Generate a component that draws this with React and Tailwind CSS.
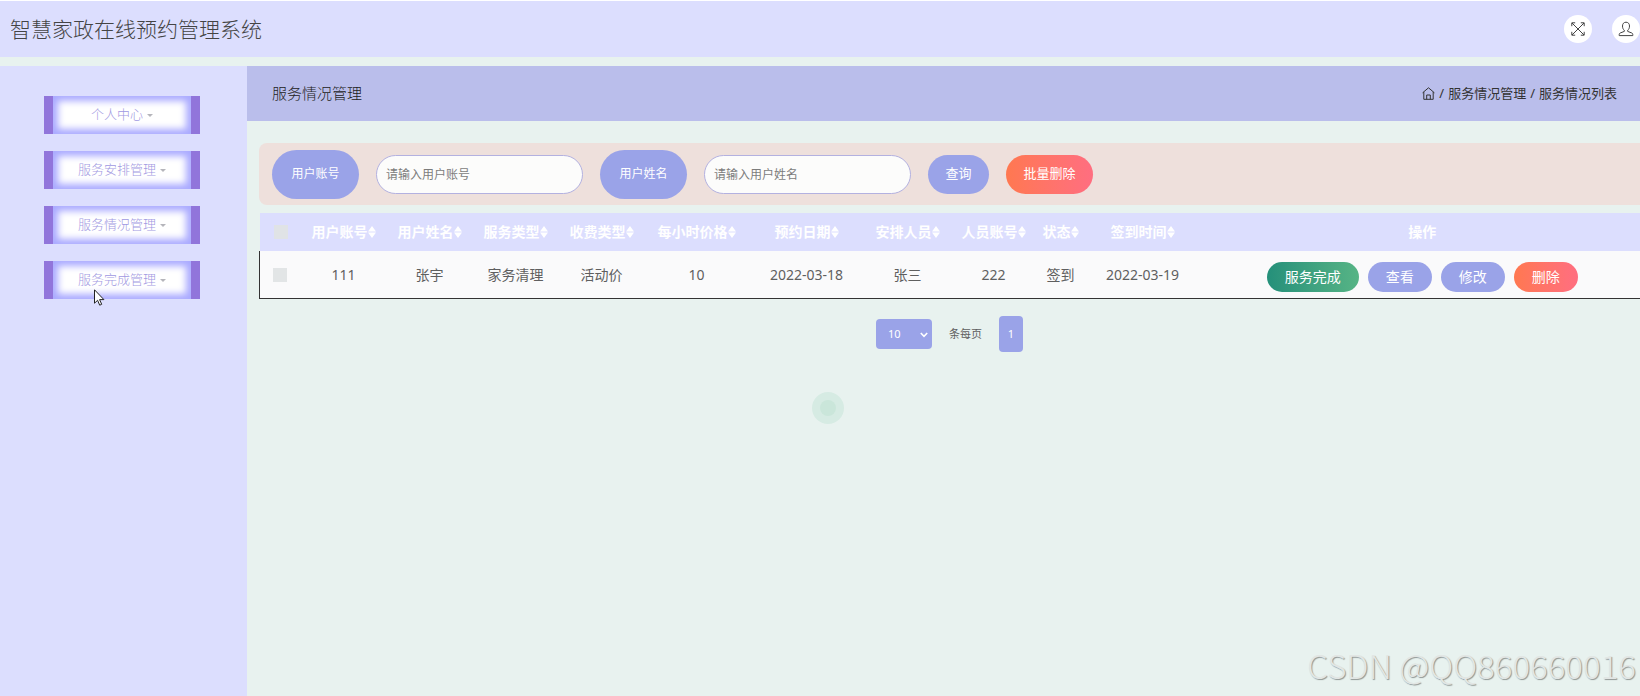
import { useState } from "react";

const menus = ["个人中心", "服务安排管理", "服务情况管理", "服务完成管理"];

const columns = [
  { key: "account",   label: "用户账号",   width: "w-[86px]" },
  { key: "name",      label: "用户姓名",   width: "w-[86px]" },
  { key: "type",      label: "服务类型",   width: "w-[86px]" },
  { key: "fee",       label: "收费类型",   width: "w-[86px]" },
  { key: "price",     label: "每小时价格", width: "w-[104px]" },
  { key: "date",      label: "预约日期",   width: "w-[116px]" },
  { key: "staff",     label: "安排人员",   width: "w-[86px]" },
  { key: "staffNo",   label: "人员账号",   width: "w-[86px]" },
  { key: "status",    label: "状态",       width: "w-[48px]" },
  { key: "checkedAt", label: "签到时间",   width: "w-[116px]" },
];

const rows = [
  {
    account: "111", name: "张宇", type: "家务清理", fee: "活动价", price: "10",
    date: "2022-03-18", staff: "张三", staffNo: "222", status: "签到", checkedAt: "2022-03-19",
  },
];

function FullscreenIcon() {
  return (
    <svg className="h-4 w-4" viewBox="0 0 16 16" fill="none" stroke="currentColor" strokeWidth="1">
      <path d="M2 2l12 12M14 2L2 14M1.8 5.2V1.8h3.4M10.8 1.8h3.4v3.4M14.2 10.8v3.4h-3.4M5.2 14.2H1.8v-3.4" />
    </svg>
  );
}

function UserIcon() {
  return (
    <svg className="h-4 w-4" viewBox="0 0 16 16" fill="none" stroke="currentColor" strokeWidth="1">
      <path d="M6.3 9.2C5 8.3 4.5 6.8 4.5 5c0-2.3 1.4-3.8 3.5-3.8s3.500 1.500 3.500 3.800c0 1.800-.5 3.300-1.800 4.200v1.200l4.100 1.600c.7.300 1 .8 1 1.600v1H1.200v-1c0-.8.3-1.300 1-1.600l4.100-1.600z" />
    </svg>
  );
}

function HomeIcon() {
  return (
    <svg className="h-[13px] w-[13px]" viewBox="0 0 13 13" fill="none" stroke="currentColor" strokeWidth="1">
      <path d="M.6 5.800L6.500.8l5.900 5M1.800 5v7.300h9.400V5M4.700 12.300V8h3.600v4.300" />
    </svg>
  );
}

function SortIcon() {
  return (
    <svg className="h-3 w-2 shrink-0" viewBox="0 0 8 12" fill="currentColor">
      <path d="M4 0l4 5.400H0zM4 12L0 6.600h8z" />
    </svg>
  );
}

function Checkbox({ label, tone }) {
  return (
    <input type="checkbox" aria-label={label}
      className={`block h-[14px] w-[14px] appearance-none ${tone}`} />
  );
}

function SearchField({ id, label, placeholder }) {
  return (
    <>
      <label htmlFor={id}
        className="flex h-[49px] w-[87px] shrink-0 items-center justify-center rounded-full bg-[#9aa3e8] text-xs text-white">
        {label}
      </label>
      <input id={id} type="text" placeholder={placeholder}
        className="h-[39px] w-[207px] rounded-full border border-[#b3b1e0] bg-[#fcfcfb] px-[9px] text-xs
                   text-gray-700 outline-none placeholder:text-[#7c7c7c]" />
    </>
  );
}

function ActionButton({ children, tone }) {
  return (
    <button type="button" className={`h-[30px] rounded-full px-[18px] text-sm text-white ${tone}`}>
      {children}
    </button>
  );
}

function Sidebar() {
  return (
    <aside className="w-[247px] shrink-0 bg-[#dcdefe] pt-[30px] pr-[47px] pl-11">
      <nav className="flex flex-col gap-[17px]">
        {menus.map((item) => (
          <button key={item} type="button"
            className="flex h-[38px] items-center justify-center gap-1 border-x-[9px] border-[#9175db] bg-white
                       text-[13px] font-light text-[#9f99e2] shadow-[inset_0_0_7px_5px_#aaaaff]">
            {item}
            <span className="border-x-[3px] border-t-[3px] border-x-transparent border-t-[#b5b5bb]" />
          </button>
        ))}
      </nav>
    </aside>
  );
}

function DataTable() {
  return (
    <table className="mt-2 w-full table-fixed border-collapse text-center text-sm">
      <thead>
        <tr className="h-[38px] bg-[#dcdefe] text-white">
          <th className="w-[41px] pl-[14px]"><Checkbox label="全选" tone="bg-[#e0e3e6]" /></th>
          {columns.map((col) => (
            <th key={col.key} className={`whitespace-nowrap font-bold ${col.width}`}>
              <span className="flex items-center justify-center">{col.label}<SortIcon /></span>
            </th>
          ))}
          <th className="pl-1 font-bold">操作</th>
        </tr>
      </thead>
      <tbody>
        {rows.map((row) => (
          <tr key={row.account} className="h-[47px] border-b border-l border-[#333] bg-[#fafafb] text-[#5f5f5f]">
            <td className="pt-0.5 pl-[13px]"><Checkbox label={`选择 ${row.account}`} tone="bg-[#e2e5e6]" /></td>
            {columns.map((col) => (
              <td key={col.key} className="whitespace-nowrap pt-0.5">{row[col.key]}</td>
            ))}
            <td className="pt-0.5 pl-1">
              <div className="flex justify-center gap-[9px] pt-1">
                <ActionButton tone="bg-linear-to-r from-[#24907a] to-[#56b485]">服务完成</ActionButton>
                <ActionButton tone="bg-[#9aa3e8]">查看</ActionButton>
                <ActionButton tone="bg-[#9aa3e8]">修改</ActionButton>
                <ActionButton tone="bg-linear-to-r from-[#ff7850] to-[#ff6e80]">删除</ActionButton>
              </div>
            </td>
          </tr>
        ))}
      </tbody>
    </table>
  );
}

function Pagination() {
  const [size, setSize] = useState("10");

  return (
    <div className="mt-[17px] flex items-center justify-center text-[11px] text-[#5f5f5f]">
      <div className="relative">
        <select aria-label="每页条数" value={size} onChange={(e) => setSize(e.target.value)}
          className="h-[30px] w-14 appearance-none rounded bg-[#9aa3e8] pt-0.5 pl-3 text-[11px] text-white outline-none">
          <option>10</option>
          <option>20</option>
          <option>50</option>
        </select>
        <svg className="pointer-events-none absolute top-3 right-1 h-2 w-2" viewBox="0 0 8 8"
             fill="none" stroke="white" strokeWidth="1.6">
          <path d="M.8 2L4 5.400 7.200 2" />
        </svg>
      </div>
      <span className="mx-[17px] pt-0.5">条每页</span>
      <button type="button" className="h-9 w-6 rounded bg-[#9aa3e8] pt-0.5 text-white">1</button>
    </div>
  );
}

export default function App() {
  return (
    <div className="relative flex min-h-screen flex-col overflow-hidden border-t border-white bg-[#e8f2ef]
                    font-['Noto_Sans','Noto_Sans_CJK_SC',sans-serif]">
      <header className="flex h-14 items-center justify-between bg-[#dcdefe] pl-[10px]">
        <h1 className="pt-0.5 text-[21px] font-light text-[#444]">智慧家政在线预约管理系统</h1>
        <div className="flex gap-5 text-[#444]">
          <button type="button" aria-label="全屏"
            className="flex h-7 w-7 items-center justify-center rounded-full bg-white">
            <FullscreenIcon />
          </button>
          <button type="button" aria-label="用户"
            className="flex h-7 w-7 items-center justify-center rounded-full bg-white">
            <UserIcon />
          </button>
        </div>
      </header>

      <div className="mt-[9px] flex flex-1">
        <Sidebar />

        <main className="min-w-0 flex-1">
          <div className="flex h-[55px] items-center justify-between bg-[#babeeb] pr-[23px] pl-[25px] text-[#333]">
            <h2 className="text-[15px] font-light text-[#222]">服务情况管理</h2>
            <nav className="flex items-center gap-1 text-[13px]">
              <a href="#home" aria-label="首页"><HomeIcon /></a>
              <span>/</span>
              <a href="#service">服务情况管理</a>
              <span>/</span>
              <span>服务情况列表</span>
            </nav>
          </div>

          <div className="pt-[22px] pl-3">
            <form className="flex h-[62px] items-center gap-[17px] rounded-l-lg bg-[#eee0dc] pl-[13px]"
                  onSubmit={(e) => e.preventDefault()}>
              <SearchField id="account" label="用户账号" placeholder="请输入用户账号" />
              <SearchField id="name" label="用户姓名" placeholder="请输入用户姓名" />
              <button type="submit" className="h-[39px] w-[61px] rounded-full bg-[#9aa3e8] text-[13px] text-white">
                查询
              </button>
              <button type="button"
                className="h-[39px] w-[87px] rounded-full bg-linear-to-r from-[#ff7850] to-[#ff6e80] text-[13px] text-white">
                批量删除
              </button>
            </form>

            <DataTable />
            <Pagination />
          </div>
        </main>
      </div>

      {/* click ripple */}
      <div className="absolute top-[391px] left-[812px] flex h-8 w-8 items-center justify-center rounded-full bg-[#d6ebe3]">
        <div className="h-4 w-4 rounded-full bg-[#cae6da]" />
      </div>

      {/* mouse pointer */}
      <svg className="absolute top-[288px] left-[94px] h-[17px] w-[11px]" viewBox="0 0 11 17"
           fill="white" stroke="#222" strokeWidth="1">
        <path d="M.5.800v13.400l3.100-2.900 2.100 4.900 2-.9-2.100-4.700h4.300z" />
      </svg>

      <div className="absolute right-1 bottom-1.5 text-[33px] font-light text-[#e2e6e4]
                      font-['Noto_Sans_CJK_SC',sans-serif] [text-shadow:1px_1px_1px_#8f9694]">
        CSDN @QQ860660016
      </div>
    </div>
  );
}
